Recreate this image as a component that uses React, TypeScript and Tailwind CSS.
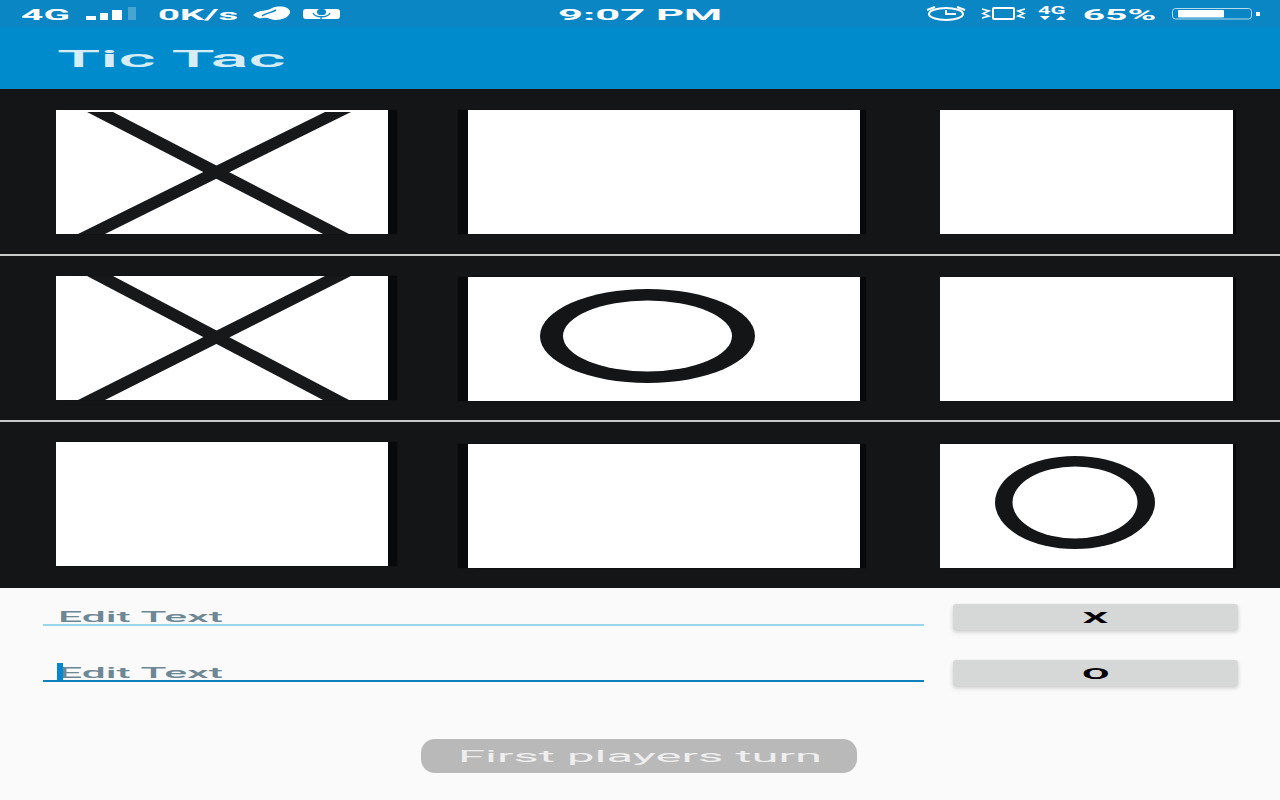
const font = "font-['Roboto',sans-serif]";

// the phone capture is stretched sideways, so all text gets scale-x
function Xmark({ top }: { top: number }) {
  return (
    <svg className="absolute inset-0 w-full h-full" viewBox="0 0 332 124">
      <polygon fill="#16181a" points={`31,${top} 57,${top} 293,124 267,124`} />
      <polygon fill="#16181a" points={`269,${top} 295,${top} 49,124 22,124`} />
    </svg>
  );
}

function Omark({ w, h, cx, cy, rx, ry, irx, iry }: { w: number; h: number; cx: number; cy: number; rx: number; ry: number; irx: number; iry: number }) {
  return (
    <svg className="absolute inset-0 w-full h-full" viewBox={`0 0 ${w} ${h}`}>
      <ellipse cx={cx} cy={cy} rx={rx} ry={ry} fill="#131517" />
      <ellipse cx={cx} cy={cy} rx={irx} ry={iry} fill="#ffffff" />
    </svg>
  );
}

function Cell({ col, drop = "", children }: { col: number; drop?: string; children?: React.ReactNode }) {
  const edge =
    col === 0
      ? "shadow-[9px_0_1px_#07090a]"
      : col === 1
        ? "shadow-[-10px_0_1px_#07090a,6px_0_1px_#07090a]"
        : "shadow-[3px_0_1px_#07090a]";
  return <div className={`relative h-[124px] bg-white ${edge} ${drop}`}>{children}</div>;
}

function StatusIcons() {
  return (
    <svg className="absolute left-0 top-0 w-[1280px] h-[27px]" viewBox="0 0 1280 27">
      {/* signal */}
      <g fill="#ffffff">
        <rect x="86" y="16" width="10" height="4" />
        <rect x="100" y="13" width="8" height="7" />
        <rect x="112" y="10" width="10" height="10" />
        <rect x="128" y="7" width="8" height="13" opacity="0.25" />
      </g>
      {/* cloud leaf */}
      <path d="M253 15 C259 9 267 12 272 8 C280 5 290 7 290 12 C290 17 282 20 275 20 C270 20 268 17 263 18 C259 19 256 17 253 15 Z" fill="#ffffff" />
      <path d="M262 16 C266 13 271 13 276 10" stroke="#0a87c7" strokeWidth="1.5" fill="none" />
      {/* mic box */}
      <rect x="303" y="9" width="37" height="10" rx="3" fill="#ffffff" />
      <rect x="317" y="9" width="9" height="6" rx="3" fill="#0a87c7" />
      <path d="M313 13 C315 18 328 18 330 13 M321 17 V19" stroke="#0a87c7" strokeWidth="1.3" fill="none" />
      {/* alarm */}
      <g fill="none" stroke="#ffffff" strokeWidth="2">
        <ellipse cx="946" cy="14" rx="17" ry="6" />
        <path d="M946 10 V14 H956" />
        <path d="M927 10 L935 7 M965 10 L957 7" />
      </g>
      {/* vibrate */}
      <g fill="none" stroke="#ffffff" strokeWidth="2">
        <rect x="993" y="8" width="21" height="11" rx="1" />
        <path d="M982 9 L989 11 L983 13.5 L989 16 L982 18" strokeWidth="1.5" />
        <path d="M1025 9 L1018 11 L1024 13.5 L1018 16 L1025 18" strokeWidth="1.5" />
      </g>
      {/* 4G arrows */}
      <polygon points="1040,16 1050,16 1045,20" fill="#ffffff" />
      <polygon points="1056,20 1066,20 1061,16" fill="#ffffff" />
      {/* battery */}
      <rect x="1172.5" y="8.5" width="79" height="10.5" rx="3" fill="none" stroke="#ffffff" strokeOpacity="0.7" strokeWidth="1" />
      <rect x="1178" y="10" width="46" height="7.5" rx="1" fill="#ffffff" />
      <rect x="1256" y="12" width="4" height="4" fill="#ffffff" />
    </svg>
  );
}

function StatusBar() {
  return (
    <div className="relative flex h-[27px] items-center bg-[#0a86c5] pt-[3px] text-white text-[15px] font-bold">
      <StatusIcons />
      <span className="ml-[21px] w-[137px]"><span className="inline-block origin-left scale-x-[2.6]">4G</span></span>
      <span className="w-[400px]"><span className="inline-block origin-left scale-x-[2.55]">0K/s</span></span>
      <span className="inline-block origin-left scale-x-[2.9]">9:07 PM</span>
      <span className="ml-auto mr-[124px]"><span className="inline-block origin-right scale-x-[2.6]">65%</span></span>
      <span className="absolute left-[1038px] top-[6px] text-[10px] leading-none"><span className="inline-block origin-left scale-x-[2.2]">4G</span></span>
    </div>
  );
}

function Row({ children, pt, pb }: { children: React.ReactNode; pt: string; pb: string }) {
  return (
    <div className={`grid grid-cols-[332px_392px_293px] items-start gap-x-[80px] pl-[56px] ${pt} ${pb}`}>
      {children}
    </div>
  );
}

export default function App() {
  return (
    <div className={`w-[1280px] h-[800px] overflow-hidden bg-[#fafafa] ${font}`}>
      <StatusBar />
      <div className="flex h-[62px] items-center bg-[#008bcc] pl-[57px] pt-[1px] text-[24px] font-medium text-[#d6edf8]">
        <span className="inline-block origin-left scale-x-[2.96]">Tic Tac</span>
      </div>

      <div className="bg-[#131517]">
        <Row pt="pt-[21px]" pb="pb-[20px]">
          <Cell col={0}><Xmark top={2} /></Cell>
          <Cell col={1} />
          <Cell col={2} />
        </Row>
        <div className="h-[1.5px] bg-[#c8c9c9]" />
        <Row pt="pt-[20.5px]" pb="pb-[19px]">
          <Cell col={0}><Xmark top={0} /></Cell>
          <Cell col={1} drop="mt-[1px]">
            <Omark w={392} h={124} cx={179.5} cy={59} rx={107.5} ry={47} irx={84.5} iry={35.5} />
          </Cell>
          <Cell col={2} drop="mt-[1px]" />
        </Row>
        <div className="h-[1.5px] bg-[#c8c9c9]" />
        <Row pt="pt-[20.5px]" pb="pb-[20px]">
          <Cell col={0} />
          <Cell col={1} drop="mt-[2px]" />
          <Cell col={2} drop="mt-[2px]">
            <Omark w={293} h={124} cx={135} cy={58.5} rx={80} ry={46.5} irx={62.5} iry={36} />
          </Cell>
        </Row>
      </div>

      <div className="flex flex-col pl-[43px] pt-[16px]">
        <div className="flex items-start gap-[29px]">
          <div className="flex h-[22px] w-[881px] items-end border-b-2 border-[#9ad6ea] pl-[15px] text-[14.5px] font-medium leading-[12px] text-[#6d8794]">
            <span className="inline-block origin-left scale-x-[2.94]">Edit Text</span>
          </div>
          <button className="flex h-[26px] w-[285px] items-center justify-center rounded-[3px] bg-[#d6d7d7] pt-[3px] text-[14px] font-bold text-black shadow-[0_2px_4px_rgba(0,0,0,0.2)]">
            <span className="inline-block scale-x-[2.85]">X</span>
          </button>
        </div>
        <div className="mt-[30px] flex items-start gap-[29px]">
          <div className="relative flex h-[22px] w-[881px] items-end border-b-2 border-[#0f80bd] pl-[15px] text-[14.5px] font-medium leading-[12px] text-[#6d8794]">
            <span className="inline-block origin-left scale-x-[2.94]">Edit Text</span>
            <span className="absolute left-[14px] top-[3px] h-[17px] w-[6px] bg-[#0288d1]" />
          </div>
          <button className="flex h-[26px] w-[285px] items-center justify-center rounded-[3px] bg-[#d6d7d7] pt-[2px] text-[14px] font-bold text-black shadow-[0_2px_4px_rgba(0,0,0,0.2)]">
            <span className="inline-block scale-x-[2.85]">O</span>
          </button>
        </div>
        <div className="ml-[378px] mt-[53px] flex h-[34px] w-[436px] items-center rounded-[14px] bg-[#b9b9b9] pl-[37px] pt-[2px] text-[17px] text-[#eeeeee]">
          <span className="inline-block origin-left scale-x-[2.88] whitespace-nowrap">First players turn</span>
        </div>
      </div>
    </div>
  );
}
